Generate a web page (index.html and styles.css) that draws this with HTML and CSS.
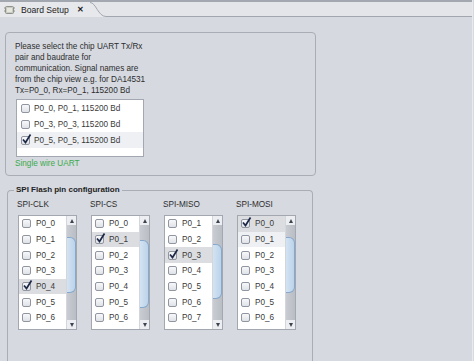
FILE: index.html
```html
<!DOCTYPE html>
<html lang="en">
<head>
    <meta charset="UTF-8">
    <title>Board Setup</title>
    <link rel="stylesheet" href="styles.css">
</head>
<body>
    <div class="page">
        <div class="tabbar">
            <div class="tab">
                <svg class="tab-icon" width="11" height="10" viewBox="0 0 11 10">
                    <rect x="1.5" y="1.5" width="8" height="7" rx="1" fill="#c9cbc4" stroke="#8f9288"/>
                    <rect x="3" y="3" width="5" height="4" fill="#e6e8df"/>
                    <path d="M0 3h1.5M0 6h1.5M9.5 3H11M9.5 6H11" stroke="#8f9288"/>
                </svg>
                <span class="tab-title">Board Setup</span>
                <span class="tab-close">&#x2715;</span>
            </div>
            <svg class="tab-edge" width="16" height="15" viewBox="0 0 16 15">
                <path d="M0 0 C6 0 8 14 16 14 L16 15 L0 15 Z" fill="#e7e8ec"/>
                <path d="M0 0.5 C6 0.5 8 14.5 16 14.5" fill="none" stroke="#a2a6ae"/>
            </svg>
            <div class="tab-rest"></div>
        </div>

        <div class="content">
            <div class="panel uart">
                <p class="intro">Please select the chip UART Tx/Rx<br>pair and baudrate for<br>communication. Signal names are<br>from the chip view e.g. for DA14531<br>Tx=P0_0, Rx=P0_1, 115200 Bd</p>
                <div class="list uart-list">
                    <div class="row"><span class="cb"></span>P0_0, P0_1, 115200 Bd</div>
                    <div class="row"><span class="cb"></span>P0_3, P0_3, 115200 Bd</div>
                    <div class="row hover"><span class="cb checked"></span>P0_5, P0_5, 115200 Bd</div>
                </div>
                <p class="note">Single wire UART</p>
            </div>

            <fieldset class="panel spi">
                <legend>SPI Flash pin configuration</legend>
                <div class="pins" id="pins"></div>
            </fieldset>
        </div>
    </div>

    <script>
        const columns = [
            { name: "SPI-CLK", first: 0, checked: "P0_4", thumb: [12, 56] },
            { name: "SPI-CS", first: 0, checked: "P0_1", thumb: [15, 68] },
            { name: "SPI-MISO", first: 1, checked: "P0_3", thumb: [19, 55] },
            { name: "SPI-MOSI", first: 0, checked: "P0_0", thumb: [12, 56], hover: "P0_1" }
        ];

        const check = '<svg width="11" height="11" viewBox="0 0 11 11"><path d="M2 5.5 L4.5 8.5 L9.5 0.5" fill="none" stroke="#1d2847" stroke-width="1.7"/></svg>';

        const pins = document.getElementById('pins');
        columns.forEach(col => {
            const el = document.createElement('div');
            el.className = 'pin-col';
            let rows = '';
            for (let i = col.first; i < col.first + 7; i++) {
                const pin = 'P0_' + i;
                const on = pin === col.checked;
                const cls = on ? 'row selected' : (pin === col.hover ? 'row hover' : 'row');
                rows += `<div class="${cls}"><span class="cb${on ? ' checked' : ''}"></span>${pin}</div>`;
            }
            // next row is scrolled out of view, only the top of its box shows
            rows += '<div class="row"><span class="cb"></span></div>';
            el.innerHTML = `
                <div class="pin-label">${col.name}</div>
                <div class="list pin-list">
                    <div class="items">${rows}</div>
                    <div class="scrollbar">
                        <span class="arrow up"></span>
                        <div class="track">
                            <div class="thumb" style="margin-top:${col.thumb[0]}px;height:${col.thumb[1]}px"></div>
                        </div>
                        <span class="arrow down"></span>
                    </div>
                </div>
            `;
            pins.appendChild(el);
        });

        document.querySelectorAll('.cb.checked').forEach(cb => cb.innerHTML = check);
    </script>
</body>
</html>
```

FILE: styles.css
```css
* {
    margin: 0;
    padding: 0;
    box-sizing: border-box;
}

body {
    background: #d6d9e0;
    font-family: 'Liberation Sans', Arial, sans-serif;
    font-size: 8.2px;
    color: #333;
    overflow: hidden;
}

.page {
    width: 473px;
    height: 361px;
    overflow: hidden;
    border-right: 1px solid #e8eaee;
}

/* tab strip */
.tabbar {
    display: flex;
    height: 17px;
    border-top: 2px solid #a3a7af;
    background: #e3e5e9;
}

.tab {
    display: flex;
    align-items: center;
    width: 90px;
    padding-left: 4px;
    background: #e7e8ec;
}

.tab-icon {
    margin-right: 6px;
}

.tab-title {
    font-size: 8.6px;
    color: #222;
}

.tab-close {
    margin-left: 8px;
    font-size: 8px;
    font-weight: bold;
    color: #222;
}

.tab-edge {
    display: block;
}

.tab-rest {
    flex: 1;
    border-bottom: 1px solid #a2a6ae;
}

/* panels */
.content {
    padding-top: 15px;
}

.panel {
    border: 1px solid #a9adb5;
    border-radius: 4px;
}

.uart {
    margin-left: 5px;
    width: 311px;
    height: 144px;
    padding: 8px 0 0 9px;
}

.intro {
    line-height: 11px;
    color: #2d2d2d;
}

.list {
    background: #fff;
    border: 1px solid #a3a8b0;
}

.uart-list {
    width: 128px;
    height: 58px;
    margin-top: 3px;
    margin-left: 1px;
}

.row {
    display: flex;
    align-items: center;
    height: 16px;
    padding-left: 4px;
    color: #3a3a3a;
    white-space: nowrap;
}

.row.hover {
    background: #eef0f3;
}

.row.selected {
    background: #dcdde1;
}

.cb {
    position: relative;
    width: 9px;
    height: 9px;
    margin-right: 4px;
    border: 1px solid #9195a0;
    border-radius: 2px;
    background: linear-gradient(#f7f8fa, #dfe2e7);
    flex-shrink: 0;
}

.cb svg {
    position: absolute;
    left: -1px;
    top: -3px;
}

.note {
    line-height: 11px;
    margin-top: 1px;
    color: #3ba94a;
}

/* SPI section */
.spi {
    margin: 9px 0 0 7px;
    width: 306px;
    height: 200px;
    padding: 4px 10px 0;
    border-bottom: none;
}

.spi legend {
    margin-left: -4px;
    padding: 0 2px;
    font-weight: bold;
    font-size: 8px;
    line-height: 10px;
    color: #222;
}

.pins {
    display: grid;
    grid-template-columns: repeat(4, 59px);
    gap: 14px;
}

.pin-label {
    line-height: 11px;
    margin-left: -1px;
    color: #2d2d2d;
}

.pin-list {
    display: flex;
    height: 115px;
    margin-top: 5px;
    overflow: hidden;
}

.pin-list .items {
    flex: 1;
}

.pin-list .row {
    height: 15.7px;
    padding-left: 3px;
}

.pin-list .cb {
    margin-right: 5px;
}

.scrollbar {
    display: flex;
    flex-direction: column;
    width: 10px;
    background: #eceef1;
    border-left: 1px solid #d3d6db;
}

.track {
    flex: 1;
    background: linear-gradient(90deg, #c9ccd2, #b9bdc4);
}

.thumb {
    background: linear-gradient(90deg, #d3e3f2, #bcd3ea);
    border: 1px solid #86a8cc;
    border-left: none;
    border-radius: 0 6px 6px 0;
}

.arrow {
    height: 9px;
    display: flex;
    align-items: center;
    justify-content: center;
}

.arrow::after {
    content: "";
    border-left: 2.5px solid transparent;
    border-right: 2.5px solid transparent;
}

.arrow.up::after {
    border-bottom: 4px solid #3d4450;
}

.arrow.down::after {
    border-top: 4px solid #3d4450;
}
```
